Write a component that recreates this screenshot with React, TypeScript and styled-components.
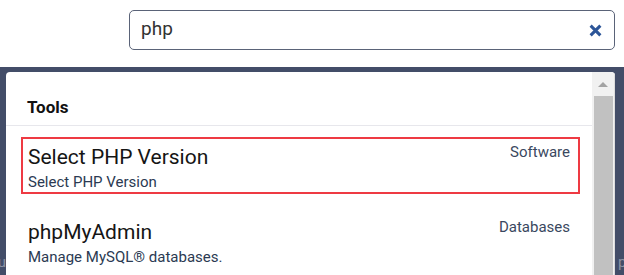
import React from "react";
import styled, { createGlobalStyle } from "styled-components";

const Global = createGlobalStyle`
  html, body { margin: 0; padding: 0; background: #ffffff; }
  body { font-family: Roboto, "Liberation Sans", Arial, sans-serif; width: 624px; height: 275px; overflow: hidden; }
  * { box-sizing: border-box; }
`;

const Page = styled.div`
  width: 624px;
  height: 275px;
  display: flex;
  flex-direction: column;
`;

const Header = styled.header`
  height: 67px;
  display: flex;
  justify-content: flex-end;
  align-items: flex-start;
  padding: 10px 9px 0 0;
`;

const SearchBox = styled.div`
  width: 486px;
  height: 40px;
  border: 1px solid #5a6378;
  border-radius: 5px;
  display: flex;
  align-items: center;
  padding: 0 12px 0 11px;
  background: #fff;
`;

const SearchText = styled.span`
  flex: 1;
  font-size: 19px;
  color: #333333;
  line-height: 22px;
  padding-bottom: 2px;
`;

const ClearIcon = styled.svg`
  width: 13px;
  height: 13px;
`;

const Overlay = styled.div`
  flex: 1;
  background: #434d68;
  display: flex;
  padding-top: 5px;
  overflow: hidden;
`;

const Gutter = styled.div<{ $w: number; $align: string }>`
  width: ${(p) => p.$w}px;
  flex: none;
  overflow: hidden;
  display: flex;
  justify-content: ${(p) => p.$align};
  padding-top: 180px;
  font-size: 15px;
  color: #8d93a3;
  line-height: 20px;
`;

const Panel = styled.div`
  flex: 1;
  background: #ffffff;
  border-radius: 4px 4px 0 0;
  display: flex;
  overflow: hidden;
`;

const Content = styled.div`
  flex: 1;
  display: flex;
  flex-direction: column;
`;

const SectionHeader = styled.div`
  height: 54px;
  padding: 17px 0 0 21px;
  display: flex;
  align-items: center;
  font-weight: 700;
  font-size: 17px;
  color: #111111;
  border-bottom: 1px solid #e7e7ec;
`;

const List = styled.div`
  display: flex;
  flex-direction: column;
  gap: 18px;
  padding: 11px 12px 0 15px;
`;

const Item = styled.div<{ $active?: boolean }>`
  border: 2px solid ${(p) => (p.$active ? "#ee3a43" : "transparent")};
  padding: 5px 8px 0 5px;
  display: grid;
  grid-template-columns: 1fr auto;
  grid-template-rows: 26px 22px;
`;

const Title = styled.div`
  font-size: 21px;
  line-height: 26px;
  color: #151515;
`;

const Desc = styled.div`
  font-size: 15px;
  line-height: 20px;
  padding-top: 2px;
  color: #2b3a52;
  grid-column: 1 / 2;
`;

const Category = styled.div`
  font-size: 15px;
  line-height: 16px;
  color: #3a4860;
  align-self: start;
`;

const Scrollbar = styled.div`
  width: 23px;
  flex: none;
  background: #f1f1f1;
  border-right: 1px solid #dcdcdc;
  display: flex;
  flex-direction: column;
`;

const ArrowButton = styled.div`
  height: 24px;
  display: flex;
  align-items: center;
  justify-content: center;
`;

const Arrow = styled.div`
  width: 0;
  height: 0;
  border-left: 5px solid transparent;
  border-right: 5px solid transparent;
  border-bottom: 5px solid #a3a3a3;
`;

const Thumb = styled.div`
  flex: 1;
  margin: 0 1px 0 2px;
  background: #c1c1c1;
`;

const GhostText = styled.span<{ $pad?: number }>`
  padding-left: ${(p) => p.$pad ?? 0}px;
`;

export default function App() {
  return (
    <>
      <Global />
      <Page>
        <Header>
          <SearchBox>
            <SearchText>php</SearchText>
            <ClearIcon viewBox="0 0 12 12">
              <path d="M1.5 1.5 L10.5 10.5 M10.5 1.5 L1.5 10.5" stroke="#2c5598" strokeWidth="2.8" strokeLinecap="butt" />
            </ClearIcon>
          </SearchBox>
        </Header>
        <Overlay>
          <Gutter $w={6} $align="flex-end">
            <GhostText>u</GhostText>
          </Gutter>
          <Panel>
            <Content>
              <SectionHeader>Tools</SectionHeader>
              <List>
                <Item $active>
                  <Title>Select PHP Version</Title>
                  <Category>Software</Category>
                  <Desc>Select PHP Version</Desc>
                </Item>
                <Item>
                  <Title>phpMyAdmin</Title>
                  <Category>Databases</Category>
                  <Desc>Manage MySQL® databases.</Desc>
                </Item>
              </List>
            </Content>
            <Scrollbar>
              <ArrowButton>
                <Arrow />
              </ArrowButton>
              <Thumb />
            </Scrollbar>
          </Panel>
          <Gutter $w={9} $align="flex-start">
            <GhostText $pad={3}>p</GhostText>
          </Gutter>
        </Overlay>
      </Page>
    </>
  );
}
